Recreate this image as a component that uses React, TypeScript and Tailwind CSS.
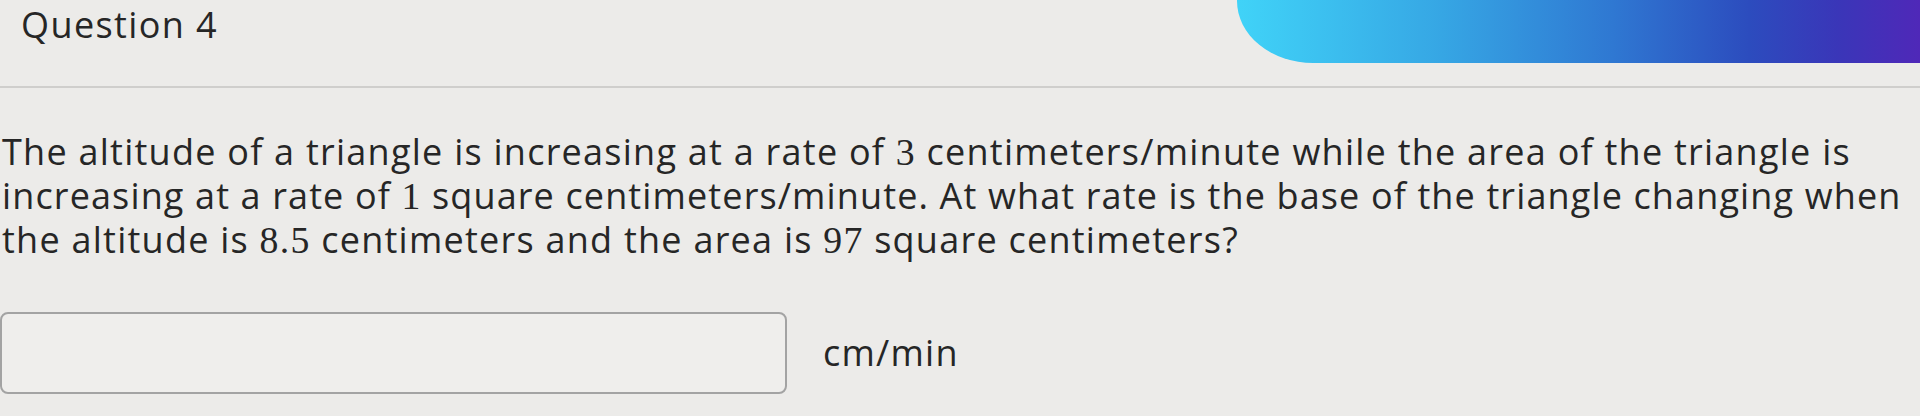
export default function App() {
  const serif = { fontFamily: '"Liberation Serif", serif', fontSize: '1.05em' };
  return (
    <div className="w-full h-[416px] overflow-hidden bg-[#ecebe9] text-[#262626] font-['Open_Sans',sans-serif]">
      <div className="flex h-[63px]">
        <h2 className="pl-[21px] pt-[2px] text-[36px] leading-[45px] tracking-[1.4px]">Question 4</h2>
        <div className="ml-auto w-[683px] h-[63px] rounded-bl-[76px_62px] bg-[linear-gradient(90deg,#40d3f8_0%,#36a6e4_30%,#2f78d2_55%,#2c4cbe_75%,#3a36b8_88%,#4f28b8_100%)]" />
      </div>
      <div className="mt-[23px] h-[2px] bg-[#cfcecc]" />
      <p className="mt-[42px] pl-[2px] text-[36px] leading-[44px] tracking-[1.25px] whitespace-nowrap">
        The altitude of a triangle is increasing at a rate of <span style={serif}>3</span> centimeters/minute while the area of the triangle is
        <br />
        <span className="tracking-[1.13px]">
          increasing at a rate of <span style={serif}>1</span> square centimeters/minute. At what rate is the base of the triangle changing when
        </span>
        <br />
        the altitude is <span style={serif}>8.5</span> centimeters and the area is <span style={serif}>97</span> square centimeters?
      </p>
      <div className="mt-[50px] flex items-center gap-[36px]">
        <input
          type="text"
          className="w-[787px] h-[82px] border-2 border-[#a3a3a3] rounded-[8px] bg-[#efeeec] px-4 text-[36px]"
        />
        <span className="text-[36px] tracking-[1.25px]">cm/min</span>
      </div>
    </div>
  );
}
